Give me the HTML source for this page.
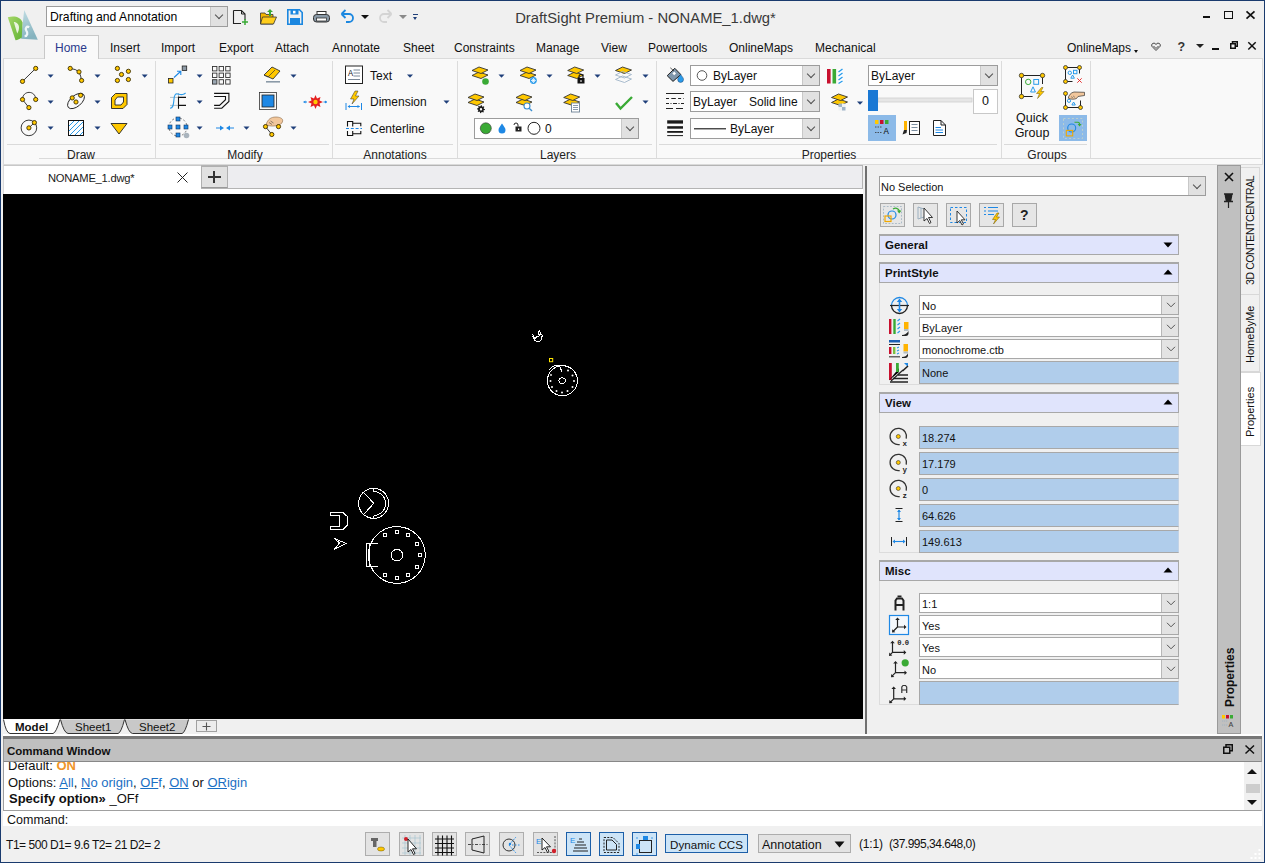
<!DOCTYPE html>
<html><head><meta charset="utf-8">
<style>
*{box-sizing:border-box;margin:0;padding:0}
html,body{width:1265px;height:863px;overflow:hidden;background:#f0f0f0;font-family:"Liberation Sans",sans-serif;font-size:12px;color:#000}
.a{position:absolute}
svg{position:absolute;overflow:visible}
.t{position:absolute;white-space:nowrap;line-height:1}
.combo{position:absolute;background:#fff;border:1px solid #9c9c9c}
.combo .dd{position:absolute;right:0;top:0;bottom:0;width:17px;background:#e1e1e1;border-left:1px solid #c8c8c8}
.combo .dd:after{content:"";position:absolute;left:5px;top:5px;width:5px;height:5px;border-right:1px solid #505050;border-bottom:1px solid #505050;transform:rotate(45deg)}
.sep{position:absolute;width:1px;background:#dcdcdc}
.tri{position:absolute;width:0;height:0;border-left:3.5px solid transparent;border-right:3.5px solid transparent;border-top:4px solid #1f3f7a}
</style></head><body>
<!-- window border -->
<div class="a" style="left:0;top:0;width:1265px;height:863px;border:1px solid #1a3b6e;border-width:1px 1px 1px 1px"></div>

<div id="title">
<!-- DS logo -->
<svg style="left:0;top:0" width="45" height="45" viewBox="0 0 45 45">
 <defs><linearGradient id="lg1" x1="0" y1="0" x2="1" y2="1"><stop offset="0" stop-color="#a6d867"/><stop offset="1" stop-color="#62b236"/></linearGradient>
 <linearGradient id="lg2" x1="0" y1="0" x2="0.3" y2="1"><stop offset="0" stop-color="#c2dde4"/><stop offset="1" stop-color="#85b3bf"/></linearGradient></defs>
 <path d="M24.2 10 L37.8 39.8 L21 38.8 Z" fill="url(#lg2)"/>
 <path d="M7.8 17.2 C14 15.5 20.5 16.5 22.5 22.5 L21.8 37.5 C20 39 17.5 40 15.5 40.2 Z" fill="url(#lg1)"/>
 <path d="M13.8 22 C16.8 22 19.2 24.5 19 27.5 C19 30 18.2 32 17.2 33.5 Z" fill="#eaf4dd"/>
 <path d="M29.2 27.2 C26.5 25.8 24.8 28.5 26.3 30.6 C28 32.8 27.6 36 24.6 36.2" stroke="#eef6f8" stroke-width="2.3" fill="none"/>
</svg>
<div class="combo" style="left:46px;top:6px;width:182px;height:21px"><div class="dd"></div>
 <div class="t" style="left:3px;top:4px;font-size:12.2px">Drafting and Annotation</div></div>
<!-- new -->
<svg style="left:233px;top:10px" width="16" height="15" viewBox="0 0 16 15"><path d="M0.5 0.5 H8.5 L12 4 V10 M0.5 0.5 V13.5 H8" fill="none" stroke="#222" stroke-width="1.1"/><path d="M8.5 0.5 V4 H12" fill="none" stroke="#222" stroke-width="1"/><path d="M12 9 V15 M9 12 H15" stroke="#39a935" stroke-width="1.5"/></svg>
<!-- open -->
<svg style="left:260px;top:8px" width="17" height="17" viewBox="0 0 17 17"><path d="M0.5 5 H5 L6 6.5 H13 V16 H0.5 Z" fill="#f5b800" stroke="#333" stroke-width="0.8"/><path d="M2.5 9 H16.5 L13.5 16 H0.5 Z" fill="#ffcd1c" stroke="#333" stroke-width="0.8"/><path d="M10 1 L7 4 H9 V8 H11 V4 H13 Z" fill="#39a935"/></svg>
<!-- save -->
<svg style="left:287px;top:9px" width="16" height="16" viewBox="0 0 16 16"><path d="M0.8 0.8 H12.5 L15.2 3.5 V15.2 H0.8 Z" fill="none" stroke="#1b87e0" stroke-width="1.6"/><rect x="3.5" y="1" width="8" height="4.5" fill="#1b87e0"/><rect x="6" y="1.8" width="2.5" height="2.6" fill="#fff"/><rect x="3" y="9" width="10" height="6" fill="#1b87e0"/></svg>
<!-- print -->
<svg style="left:313px;top:11px" width="17" height="12" viewBox="0 0 17 12"><rect x="4" y="0.5" width="9" height="4" fill="#fff" stroke="#333"/><rect x="0.5" y="3.5" width="16" height="7.5" rx="3" fill="#8a9aa8" stroke="#333"/><rect x="3.5" y="7" width="10" height="3" fill="#fff" stroke="#333" stroke-width="0.8"/></svg>
<!-- undo -->
<svg style="left:341px;top:9px" width="13" height="15" viewBox="0 0 13 15"><path d="M1.5 5 H8 A4 4 0 0 1 8 13 H5" fill="none" stroke="#1b87e0" stroke-width="1.8"/><path d="M0.5 5 L4.5 1 M0.5 5 L4.5 9" stroke="#1b87e0" stroke-width="1.8" fill="none"/></svg>
<div class="tri" style="left:361px;top:15px;border-top-color:#111;border-left-width:4px;border-right-width:4px"></div>
<svg style="left:379px;top:9px" width="13" height="15" viewBox="0 0 13 15"><path d="M11.5 5 H5 A4 4 0 0 0 5 13 H8" fill="none" stroke="#d4d4d4" stroke-width="1.8"/><path d="M12.5 5 L8.5 1 M12.5 5 L8.5 9" stroke="#d4d4d4" stroke-width="1.8" fill="none"/></svg>
<div class="tri" style="left:399px;top:15px;border-top-color:#8a8a8a;border-left-width:4px;border-right-width:4px"></div>
<div class="a" style="left:413px;top:14px;width:5px;height:1px;background:#1f3f7a"></div>
<div class="tri" style="left:413px;top:17px;border-left-width:2.5px;border-right-width:2.5px;border-top-width:3px"></div>
<div class="t" style="left:0;width:1291px;text-align:center;top:11px;font-size:14.8px;color:#3a3a3a">DraftSight Premium - NONAME_1.dwg*</div>
<!-- window controls -->
<div class="a" style="left:1203px;top:15.5px;width:6.5px;height:2.2px;background:#111"></div>
<div class="a" style="left:1223.5px;top:10.5px;width:9.5px;height:8.5px;border:1.6px solid #111"></div>
<svg style="left:1246px;top:11px" width="9" height="8" viewBox="0 0 9 8"><path d="M0.5 0.3 L8.5 7.7 M8.5 0.3 L0.5 7.7" stroke="#111" stroke-width="1.7"/></svg>
</div>

<div id="ribbon">
<div class="a" style="left:3px;top:58px;width:1260px;height:107px;background:#f9f9f9;border:1px solid #dadada"></div>
<div class="a" style="left:44px;top:35px;width:55px;height:24px;background:#f9f9f9;border:1px solid #c8c8c8;border-bottom:none"></div>
<div class="t" style="left:55px;top:41.5px;font-size:12px;color:#2b3a8c">Home</div>
<div class="t" style="left:110px;top:41.5px;font-size:12px;color:#111">Insert</div>
<div class="t" style="left:161px;top:41.5px;font-size:12px;color:#111">Import</div>
<div class="t" style="left:219px;top:41.5px;font-size:12px;color:#111">Export</div>
<div class="t" style="left:275px;top:41.5px;font-size:12px;color:#111">Attach</div>
<div class="t" style="left:332px;top:41.5px;font-size:12px;color:#111">Annotate</div>
<div class="t" style="left:403px;top:41.5px;font-size:12px;color:#111">Sheet</div>
<div class="t" style="left:454px;top:41.5px;font-size:12px;color:#111">Constraints</div>
<div class="t" style="left:536px;top:41.5px;font-size:12px;color:#111">Manage</div>
<div class="t" style="left:601px;top:41.5px;font-size:12px;color:#111">View</div>
<div class="t" style="left:648px;top:41.5px;font-size:12px;color:#111">Powertools</div>
<div class="t" style="left:729px;top:41.5px;font-size:12px;color:#111">OnlineMaps</div>
<div class="t" style="left:815px;top:41.5px;font-size:12px;color:#111">Mechanical</div>
<div class="t" style="left:1067px;top:41.5px;font-size:12px;color:#111">OnlineMaps</div>
<div class="tri" style="left:1133.5px;top:49.5px;border-top-color:#111;border-left-width:2.8px;border-right-width:2.8px;border-top-width:3px"></div>
<svg style="left:1150.5px;top:42.5px" width="10" height="8" viewBox="0 0 10 8"><path d="M5 7.5 L0.8 3.2 A2.1 2.1 0 0 1 5 1.6 A2.1 2.1 0 0 1 9.2 3.2 Z M2.5 3 L5 5.5 L7.5 3" fill="none" stroke="#444" stroke-width="1"/></svg>
<div class="t" style="left:1177.5px;top:40.5px;font-size:12.5px;font-weight:bold;color:#333">?</div>
<div class="tri" style="left:1196px;top:44px;border-top-color:#222;border-left-width:4px;border-right-width:4px;border-top-width:4px"></div>
<div class="a" style="left:1212px;top:48px;width:7px;height:2px;background:#111"></div>
<svg style="left:1230px;top:41.3px" width="8" height="8" viewBox="0 0 8 8"><rect x="0.75" y="2.75" width="4.5" height="4.5" fill="none" stroke="#111" stroke-width="1.5"/><path d="M2.5 2.5 V0.75 H7.25 V5.25 H5.5" fill="none" stroke="#111" stroke-width="1.5"/></svg>
<svg style="left:1248px;top:42px" width="8" height="8" viewBox="0 0 8 8"><path d="M0.3 0.3 L7.7 7.5 M7.7 0.3 L0.3 7.5" stroke="#111" stroke-width="1.5"/></svg>
<div class="combo" style="left:474px;top:118px;width:165px;height:21px"><div class="dd"></div></div><div class="combo" style="left:690px;top:65px;width:130px;height:21px"><div class="dd"></div></div><div class="combo" style="left:690px;top:91px;width:130px;height:21px"><div class="dd"></div></div><div class="combo" style="left:690px;top:118px;width:130px;height:21px"><div class="dd"></div></div><div class="combo" style="left:868px;top:65px;width:130px;height:21px"><div class="dd"></div></div><div class="a" style="left:973px;top:89px;width:25px;height:25px;background:#fff;border:1px solid #c8c8c8"></div><svg style="left:0;top:0" width="1265" height="165" viewBox="0 0 1265 165">
<path d="M22.5 81.4 L35.7 68.4" stroke="#222" stroke-width="0.9"/><circle cx="22.5" cy="81.4" r="2.1" fill="#ffc800" stroke="#3a2d00" stroke-width="0.9"/><circle cx="35.7" cy="68.4" r="2.1" fill="#ffc800" stroke="#3a2d00" stroke-width="0.9"/><path d="M70.2 68.4 Q76 69 79 71.9 Q81 76 81.6 80.5" stroke="#222" stroke-width="0.9" fill="none"/><circle cx="70.2" cy="68.4" r="2.1" fill="#ffc800" stroke="#3a2d00" stroke-width="0.9"/><circle cx="79" cy="71.9" r="2.1" fill="#ffc800" stroke="#3a2d00" stroke-width="0.9"/><circle cx="81.6" cy="80.5" r="2.1" fill="#ffc800" stroke="#3a2d00" stroke-width="0.9"/><circle cx="117.4" cy="68.4" r="2.1" fill="#ffc800" stroke="#3a2d00" stroke-width="0.9"/><circle cx="128.4" cy="71.3" r="2.1" fill="#ffc800" stroke="#3a2d00" stroke-width="0.9"/><circle cx="121.5" cy="74.5" r="2.1" fill="#ffc800" stroke="#3a2d00" stroke-width="0.9"/><circle cx="117.4" cy="80.5" r="2.1" fill="#ffc800" stroke="#3a2d00" stroke-width="0.9"/><circle cx="128.4" cy="79.5" r="2.1" fill="#ffc800" stroke="#3a2d00" stroke-width="0.9"/><path d="M22.5 99.5 C22.5 90 35.7 90 35.7 99.5 M22.5 99.5 L28.9 107.6" stroke="#222" stroke-width="0.9" fill="none"/><circle cx="22.5" cy="99.5" r="2.1" fill="#ffc800" stroke="#3a2d00" stroke-width="0.9"/><circle cx="35.7" cy="99.5" r="2.1" fill="#ffc800" stroke="#3a2d00" stroke-width="0.9"/><circle cx="28.9" cy="107.6" r="2.1" fill="#ffc800" stroke="#3a2d00" stroke-width="0.9"/><ellipse cx="76" cy="101" rx="10" ry="5.5" transform="rotate(-40 76 101)" fill="none" stroke="#222" stroke-width="0.9"/><circle cx="72.2" cy="97.9" r="2.1" fill="#ffc800" stroke="#3a2d00" stroke-width="0.9"/><circle cx="80.6" cy="95.3" r="2.1" fill="#ffc800" stroke="#3a2d00" stroke-width="0.9"/><circle cx="76" cy="102" r="2.1" fill="#ffc800" stroke="#3a2d00" stroke-width="0.9"/><path d="M115.5 93.5 H127 V104.5 L123 108.5 H111.5 V97.5 Z M117.5 97 H123.5 V102 L121 105 H115 V100 Z" fill="#ffc800" fill-rule="evenodd" stroke="#222" stroke-width="0.9"/><circle cx="28.9" cy="127.9" r="7.8" fill="none" stroke="#222" stroke-width="0.9"/><path d="M28.9 127.9 L34.4 122.6" stroke="#222" stroke-width="0.9"/><circle cx="28.9" cy="127.9" r="2.1" fill="#ffc800" stroke="#3a2d00" stroke-width="0.9"/><circle cx="34.4" cy="122.6" r="2.1" fill="#ffc800" stroke="#3a2d00" stroke-width="0.9"/><rect x="68.5" y="120.5" width="15" height="15" fill="#fff" stroke="#111" stroke-width="1"/><path d="M69 126 L74 121 M69 131 L79 121 M70 135 L83 122 M75 135 L83 127 M80 135 L83 132" stroke="#2a9bea" stroke-width="1"/><path d="M111 123.5 H127 L119 134 Z" fill="#ffc800" stroke="#222" stroke-width="0.9"/><path d="M47.6 74.5 H53.6 L50.6 77.8 Z" fill="#1f3f7a"/><path d="M47.6 100.5 H53.6 L50.6 103.8 Z" fill="#1f3f7a"/><path d="M47.6 126.5 H53.6 L50.6 129.8 Z" fill="#1f3f7a"/><path d="M94.5 74.5 H100.5 L97.5 77.8 Z" fill="#1f3f7a"/><path d="M94.5 100.5 H100.5 L97.5 103.8 Z" fill="#1f3f7a"/><path d="M94.5 126.5 H100.5 L97.5 129.8 Z" fill="#1f3f7a"/><path d="M141.7 74.5 H147.7 L144.7 77.8 Z" fill="#1f3f7a"/><rect x="168.5" y="78.5" width="4.5" height="4.5" fill="#ffc800" stroke="#222" stroke-width="0.8"/><rect x="182.2" y="66" width="4.5" height="4.5" fill="#8e9ba6" stroke="#222" stroke-width="0.8"/><path d="M174 77.5 L180.5 71.5 M177 71.3 H180.8 V75" stroke="#1e88e5" stroke-width="1.1" fill="none"/><rect x="212.5" y="66.5" width="4.4" height="4.4" fill="none" stroke="#333" stroke-width="0.9"/><rect x="219.1" y="66.5" width="4.4" height="4.4" fill="none" stroke="#333" stroke-width="0.9"/><rect x="225.7" y="66.5" width="4.4" height="4.4" fill="none" stroke="#333" stroke-width="0.9"/><rect x="212.5" y="73.1" width="4.4" height="4.4" fill="none" stroke="#333" stroke-width="0.9"/><rect x="219.1" y="73.1" width="4.4" height="4.4" fill="none" stroke="#333" stroke-width="0.9"/><rect x="225.7" y="73.1" width="4.4" height="4.4" fill="none" stroke="#333" stroke-width="0.9"/><rect x="212.5" y="79.7" width="4.4" height="4.4" fill="#9aa7b2" stroke="#333" stroke-width="0.9"/><rect x="219.1" y="79.7" width="4.4" height="4.4" fill="none" stroke="#333" stroke-width="0.9"/><rect x="225.7" y="79.7" width="4.4" height="4.4" fill="none" stroke="#333" stroke-width="0.9"/><path d="M264 75 L272 67 L280 71 L273 79 Z" fill="#ffc800" stroke="#333" stroke-width="0.9"/><path d="M264 75 L268 77 L275 70" stroke="#333" stroke-width="0.7" fill="none"/><rect x="266" y="81" width="14" height="1.6" fill="#8b9aa8"/><path d="M170 97.4 H178.5 M170 105.4 H178.5 M178.5 93 V96.5" stroke="#9fb0ba" stroke-width="0.8"/><path d="M178.5 96.5 V108.8 M178.5 97.4 H186 M178.5 105.4 H186" stroke="#111" stroke-width="1.1" fill="none"/><path d="M170 108.2 C173.5 108.2 173.5 104 174 99 C174.3 95 175 93.8 177 93.8 C179 94 180 95 182.5 94.5 C184 94.2 185 93.5 185.6 93" stroke="#2a9bea" stroke-width="1.1" fill="none"/><path d="M214.1 93.4 H228.9 V101.4 L221.8 108.2 H214.1 M214.1 96.5 H225.5 V99.7 L219.5 105.4 H214.1" stroke="#111" stroke-width="1.1" fill="none"/><rect x="259.5" y="92.5" width="17" height="17" fill="none" stroke="#333" stroke-width="0.8"/><rect x="262" y="95" width="12" height="12" fill="#1e88e5" stroke="#222" stroke-width="0.8"/><path d="M315.5 95 L317 98.5 L320.5 97 L319.5 100.5 L323 102 L319.5 103.5 L320.5 107 L317 105.5 L315.5 109 L314 105.5 L310.5 107 L311.5 103.5 L308 102 L311.5 100.5 L310.5 97 L314 98.5 Z" fill="#e52020"/><circle cx="315.5" cy="102" r="2.2" fill="#ffc800"/><path d="M303.5 102 H307 M323.5 102 H327" stroke="#1e88e5" stroke-width="1"/><path d="M303.5 102 L305.5 100.5 V103.5 Z M327 102 L325 100.5 V103.5 Z" fill="#1e88e5"/><circle cx="178" cy="127" r="9" fill="none" stroke="#555" stroke-width="0.8" stroke-dasharray="2 2"/><rect x="176" y="117" width="4" height="4" fill="#1e88e5" stroke="#13325b" stroke-width="0.6"/><rect x="168" y="125" width="4" height="4" fill="#1e88e5" stroke="#13325b" stroke-width="0.6"/><rect x="176" y="125" width="4" height="4" fill="#1e88e5" stroke="#13325b" stroke-width="0.6"/><rect x="184" y="125" width="4" height="4" fill="#1e88e5" stroke="#13325b" stroke-width="0.6"/><rect x="176" y="133" width="4" height="4" fill="#1e88e5" stroke="#13325b" stroke-width="0.6"/><circle cx="186.5" cy="135.5" r="2.8" fill="#a9b4bd"/><path d="M216 128 H221 M234 128 H229" stroke="#1e88e5" stroke-width="1.1"/><path d="M224 128 L220 125.5 V130.5 Z M226 128 L230 125.5 V130.5 Z" fill="#1e88e5"/><path d="M265.5 126.6 L271.8 134.5" stroke="#222" stroke-width="0.9" fill="none"/><path d="M266 124.5 C268 119 271 117 276 117 C279 117 283 118 282.7 121 C282.5 124 279 125 277 125.5 C273 126.5 270 126 268 125.5 Z" fill="#f2c79c" stroke="#8a6a4a" stroke-width="0.6"/><path d="M269 122.5 L272 124.5 M270.5 121 L273.5 123" stroke="#444" stroke-width="0.6"/><circle cx="265.5" cy="126.6" r="2.1" fill="#ffc800" stroke="#3a2d00" stroke-width="0.9"/><circle cx="278.5" cy="126.6" r="2.1" fill="#ffc800" stroke="#3a2d00" stroke-width="0.9"/><circle cx="271.8" cy="134.5" r="2.1" fill="#ffc800" stroke="#3a2d00" stroke-width="0.9"/><path d="M196.6 74.5 H202.6 L199.6 77.8 Z" fill="#1f3f7a"/><path d="M290.5 74.5 H296.5 L293.5 77.8 Z" fill="#1f3f7a"/><path d="M196.6 100.5 H202.6 L199.6 103.8 Z" fill="#1f3f7a"/><path d="M196.6 126.5 H202.6 L199.6 129.8 Z" fill="#1f3f7a"/><path d="M243.5 126.5 H249.5 L246.5 129.8 Z" fill="#1f3f7a"/><path d="M290.5 126.5 H296.5 L293.5 129.8 Z" fill="#1f3f7a"/><rect x="345.5" y="66" width="17" height="17.5" fill="#fff" stroke="#222" stroke-width="1"/><text x="348" y="76" font-family="Liberation Mono" font-size="8.5" fill="#222">A</text><path d="M353.5 70 H360 M353.5 73 H360 M353.5 76 H360 M348 79.5 H360" stroke="#6a7b8c" stroke-width="0.9"/><path d="M355 91 L350.5 99 H354 L352 104 L359 96 H355.5 L358 91 Z" fill="#ffc800" stroke="#333" stroke-width="0.5"/><path d="M346 103 V110 M361.5 103 V110 M348 106.5 H359.5" stroke="#1e88e5" stroke-width="1"/><path d="M347.5 106.5 L350 105 V108 Z M360 106.5 L357.5 105 V108 Z" fill="#1e88e5"/><path d="M347.5 126.5 V121.5 H352.7 V126.5 M352.7 123.2 H360.8 V126.2 M347.5 131 V135.5 H352.7 V131 M352.7 133.8 H360.8 V131" fill="none" stroke="#111" stroke-width="1.1"/><path d="M346 128.5 H362" stroke="#1e88e5" stroke-width="1" stroke-dasharray="3 1.8"/><path d="M407 74.5 H413 L410 77.8 Z" fill="#1f3f7a"/><path d="M443.5 100.5 H449.5 L446.5 103.8 Z" fill="#1f3f7a"/><path d="M472 75.5 L479 72 L488 75 L481 78.5 Z" fill="#ffc800" stroke="#333" stroke-width="0.9"/><path d="M472 70.5 L479 67 L488 70 L481 73.5 Z" fill="#ffc800" stroke="#333" stroke-width="0.9"/><circle cx="485.5" cy="81.5" r="3.3" fill="#3aaa35"/><path d="M520 75.5 L527 72 L536 75 L529 78.5 Z" fill="#ffc800" stroke="#333" stroke-width="0.9"/><path d="M520 70.5 L527 67 L536 70 L529 73.5 Z" fill="#ffc800" stroke="#333" stroke-width="0.9"/><circle cx="533.4" cy="80.5" r="3.4" fill="#2a9bea"/><path d="M531 80.5 H535.8 M533.4 78 V83 M531.7 78.8 L535.1 82.2 M535.1 78.8 L531.7 82.2" stroke="#fff" stroke-width="0.8"/><path d="M567.7 75.5 L574.7 72 L583.7 75 L576.7 78.5 Z" fill="#ffc800" stroke="#333" stroke-width="0.9"/><path d="M567.7 70.5 L574.7 67 L583.7 70 L576.7 73.5 Z" fill="#ffc800" stroke="#333" stroke-width="0.9"/><rect x="577.5" y="78" width="7" height="5.5" fill="#111"/><path d="M579 78.5 V76.5 A2 2 0 0 1 583 76.5 V78.5" fill="none" stroke="#111" stroke-width="1.1"/><rect x="580.5" y="80" width="1" height="2" fill="#fff"/><path d="M615.5 70.5 L622.5 67 L631.5 70 L624.5 73.5 Z" fill="#ffc800" stroke="#333" stroke-width="0.9"/><path d="M615.5 75 L622.5 71.5 L631.5 74.5 L624.5 78 Z M615.5 79.5 L622.5 76 L631.5 79 L624.5 82.5 Z" fill="none" stroke="#9fb4c8" stroke-width="0.9"/><path d="M468 102.5 L475 99 L484 102 L477 105.5 Z" fill="#ffc800" stroke="#333" stroke-width="0.9"/><path d="M468 97.5 L475 94 L484 97 L477 100.5 Z" fill="#ffc800" stroke="#333" stroke-width="0.9"/><path d="M485.00 109.20 L484.92 109.98 L483.68 110.31 L483.41 110.81 L483.83 112.03 L483.22 112.53 L482.11 111.88 L481.57 112.04 L481.00 113.20 L480.22 113.12 L479.89 111.88 L479.39 111.61 L478.17 112.03 L477.67 111.42 L478.32 110.31 L478.16 109.77 L477.00 109.20 L477.08 108.42 L478.32 108.09 L478.59 107.59 L478.17 106.37 L478.78 105.87 L479.89 106.52 L480.43 106.36 L481.00 105.20 L481.78 105.28 L482.11 106.52 L482.61 106.79 L483.83 106.37 L484.33 106.98 L483.68 108.09 L483.84 108.63 Z M482.2 109.2 A1.2 1.2 0 1 0 479.8 109.2 A1.2 1.2 0 1 0 482.2 109.2 Z" fill="#1a1a1a" fill-rule="evenodd"/><path d="M516 102.5 L523 99 L532 102 L525 105.5 Z" fill="#ffc800" stroke="#333" stroke-width="0.9"/><path d="M516 97.5 L523 94 L532 97 L525 100.5 Z" fill="#ffc800" stroke="#333" stroke-width="0.9"/><circle cx="527" cy="106" r="3" fill="#fff" stroke="#3b8ed0" stroke-width="1.1"/><path d="M529.2 108.2 L532 111" stroke="#3b8ed0" stroke-width="1.4"/><path d="M563.7 102.5 L570.7 99 L579.7 102 L572.7 105.5 Z" fill="#ffc800" stroke="#333" stroke-width="0.9"/><path d="M563.7 97.5 L570.7 94 L579.7 97 L572.7 100.5 Z" fill="#ffc800" stroke="#333" stroke-width="0.9"/><rect x="571.5" y="103" width="8" height="9" fill="#fff" stroke="#6d8296" stroke-width="0.9"/><path d="M573 105.5 H578 M573 107.5 H578 M573 109.5 H578" stroke="#6d8296" stroke-width="0.8"/><path d="M616 103 L620.5 108.5 L632 97" stroke="#3aaa35" stroke-width="2.4" fill="none"/><path d="M498.5 74.5 H504.5 L501.5 77.8 Z" fill="#1f3f7a"/><path d="M546.5 74.5 H552.5 L549.5 77.8 Z" fill="#1f3f7a"/><path d="M594.5 74.5 H600.5 L597.5 77.8 Z" fill="#1f3f7a"/><path d="M642.5 74.5 H648.5 L645.5 77.8 Z" fill="#1f3f7a"/><path d="M642.5 100.5 H648.5 L645.5 103.8 Z" fill="#1f3f7a"/><circle cx="485.8" cy="128.3" r="5.5" fill="#3aaa35" stroke="#333" stroke-width="0.6"/><path d="M502 123.5 C504 126.5 505.5 128 505.5 130 A3.5 3.5 0 0 1 498.5 130 C498.5 128 500 126.5 502 123.5 Z" fill="#1e88e5"/><path d="M514 125 A2 2 0 0 1 518 125 V126.5" fill="none" stroke="#222" stroke-width="1"/><rect x="515.5" y="126.5" width="6" height="5" fill="#222"/><rect x="518" y="128.5" width="1.2" height="1.5" fill="#fff"/><circle cx="534" cy="128.3" r="6" fill="#fff" stroke="#222" stroke-width="1"/><path d="M674.8 68.3 L680.8 74.5 L673 81.4 L667.2 75.7 Z" fill="#7f96ab" stroke="#222" stroke-width="1"/><path d="M674.2 71.6 L676 73.4 L674.2 75.2 L672.4 73.4 Z" fill="#fff"/><path d="M670.3 67.8 L674 71" stroke="#333" stroke-width="0.8"/><path d="M680.6 74.5 C682.5 77 683.5 78 683.5 79.5 A2.9 2.9 0 0 1 677.7 79.5 C677.7 78 678.7 77 680.6 74.5 Z" fill="#2a9bea" stroke="#1a3f6a" stroke-width="0.5"/><circle cx="702" cy="75.5" r="4.8" fill="#fff" stroke="#444" stroke-width="0.9"/><path d="M666 93.5 H684" stroke="#222" stroke-width="1"/><path d="M666 98.5 H684" stroke="#222" stroke-width="1" stroke-dasharray="3 2.3 4.5 2.3"/><path d="M666 103.5 H684" stroke="#222" stroke-width="1" stroke-dasharray="3 1.5 1 1.5 4 1.5 1 1.5"/><path d="M666 108.5 H684" stroke="#222" stroke-width="1" stroke-dasharray="7 3"/><rect x="667.2" y="120.3" width="15.8" height="3.3" fill="#1a1a1a"/><rect x="667.2" y="126.2" width="15.8" height="2.5" fill="#1a1a1a"/><rect x="667.2" y="131" width="15.8" height="1.8" fill="#1a1a1a"/><rect x="667.2" y="135.1" width="15.8" height="1" fill="#1a1a1a"/><path d="M694 128.8 H726" stroke="#111" stroke-width="1.1"/><rect x="827" y="69" width="3.6" height="14.5" fill="#c8102e"/><rect x="832.5" y="69" width="3.6" height="14.5" fill="#3aaa35"/><rect x="838.5" y="69" width="4" height="14.5" fill="#fff"/><path d="M838.5 72 L842.5 69 M838.5 76 L842.5 73 M838.5 80 L842.5 77 M838.5 83.5 L842.5 81" stroke="#2a9bea" stroke-width="1.4"/><path d="M831.5 102.5 L838.5 99 L847.5 102 L840.5 105.5 Z" fill="#ffc800" stroke="#333" stroke-width="0.9"/><path d="M831.5 97.5 L838.5 94 L847.5 97 L840.5 100.5 Z" fill="#ffc800" stroke="#333" stroke-width="0.9"/><rect x="838.5" y="103.5" width="3.5" height="3.5" fill="#9fb4c8"/><rect x="842" y="107" width="3.5" height="3.5" fill="#9fb4c8"/><rect x="838.5" y="107" width="3.5" height="3.5" fill="#eef1f4"/><rect x="842" y="103.5" width="3.5" height="3.5" fill="#eef1f4"/><path d="M857 101.5 H863 L860 104.8 Z" fill="#1f3f7a"/><rect x="878" y="98" width="94" height="4" fill="#e6e6e6" stroke="#d0d0d0" stroke-width="0.8"/><rect x="868" y="90" width="10" height="21" fill="#1a78d4"/><rect x="868" y="115" width="28" height="26" fill="#8cbae8"/><rect x="875" y="120" width="3.5" height="4" fill="#ffc800"/><rect x="880" y="120" width="3.5" height="4" fill="#c8102e"/><rect x="885" y="120" width="3.5" height="4" fill="#3aaa35"/><path d="M875 127 H882 M875 132.5 H882" stroke="#333" stroke-width="0.8" stroke-dasharray="1.5 1"/><text x="883.5" y="134" font-family="Liberation Mono" font-size="9" fill="#111">A</text><rect x="904" y="121" width="3" height="9" fill="#ffb300"/><path d="M902.5 134.5 L904 130 H907 L906.5 133 Z" fill="#222"/><rect x="909.5" y="121.5" width="10" height="13" fill="#fff" stroke="#222" stroke-width="1"/><path d="M911.5 124.5 H917.5 M911.5 127.5 H917.5 M911.5 130.5 H917.5" stroke="#6d8296" stroke-width="0.9"/><path d="M933.5 120.5 H941 L945.5 125 V135.5 H933.5 Z M941 120.5 V125 H945.5" fill="#fff" stroke="#222" stroke-width="1"/><path d="M935.5 127.5 H941 M935.5 130 H943 M935.5 132.5 H943" stroke="#1e88e5" stroke-width="1"/><path d="M1021.5 75.5 H1042.5 V84 M1021.5 75.5 V96.5 H1032.6" stroke="#222" stroke-width="1" fill="none"/><circle cx="1028.2" cy="81.9" r="2.7" fill="none" stroke="#3aaa35" stroke-width="1"/><rect x="1033.8" y="79.5" width="4.8" height="4.8" fill="none" stroke="#2a9bea" stroke-width="1"/><path d="M1030.6 92 L1033 86.8 L1035.4 92 Z" fill="none" stroke="#2a9bea" stroke-width="1"/><path d="M1041.5 87.5 L1036.5 93.5 H1039.5 L1037.5 98.5 L1044 91.5 H1040.8 L1043 87.5 Z" fill="#ffc800" stroke="#6b5400" stroke-width="0.5"/><circle cx="1021.5" cy="75.5" r="2.2" fill="#ffc800" stroke="#333" stroke-width="0.8"/><circle cx="1042.5" cy="75.5" r="2.2" fill="#ffc800" stroke="#333" stroke-width="0.8"/><circle cx="1021.5" cy="96.5" r="2.2" fill="#ffc800" stroke="#333" stroke-width="0.8"/><path d="M1065.5 67.5 H1079.5 V73.5 M1065.5 67.5 V81.5 H1072.5" stroke="#222" stroke-width="1" fill="none"/><circle cx="1069.8" cy="72.8" r="1.7" fill="none" stroke="#2a9bea" stroke-width="1"/><rect x="1073.5" y="70.3" width="3.4" height="3.4" fill="none" stroke="#2a9bea" stroke-width="1"/><path d="M1070.8 78.2 L1072.6 75 L1074.4 78.2 Z" fill="none" stroke="#2a9bea" stroke-width="1"/><path d="M1077.3 78.3 L1081.7 82.7 M1081.7 78.3 L1077.3 82.7" stroke="#e52020" stroke-width="0.9"/><circle cx="1065.5" cy="67.5" r="2" fill="#ffc800" stroke="#333" stroke-width="0.8"/><circle cx="1079.5" cy="67.5" r="2" fill="#ffc800" stroke="#333" stroke-width="0.8"/><circle cx="1065.5" cy="81.5" r="2" fill="#ffc800" stroke="#333" stroke-width="0.8"/><path d="M1065.5 93.5 V107.5 H1080.5 V100.5" stroke="#222" stroke-width="1" fill="none"/><circle cx="1069" cy="100.8" r="1.6" fill="none" stroke="#2a9bea" stroke-width="1"/><path d="M1071.9 105 L1073.6 102 L1075.3 105 Z" fill="none" stroke="#2a9bea" stroke-width="1"/><path d="M1068.3 98.2 C1068.5 95.5 1071 92.5 1074 92 L1084.5 92.3 V95.5 L1078 96.5 L1076.5 98.5 C1074 99.5 1071 99.5 1068.3 98.2 Z" fill="#f2c79c" stroke="#333" stroke-width="0.7"/><path d="M1071 96.5 L1073 98 M1073 95.8 L1075 97.5" stroke="#555" stroke-width="0.6"/><circle cx="1065.5" cy="93.5" r="2" fill="#ffc800" stroke="#333" stroke-width="0.8"/><circle cx="1065.5" cy="107.5" r="2" fill="#ffc800" stroke="#333" stroke-width="0.8"/><circle cx="1080.5" cy="107.5" r="2" fill="#ffc800" stroke="#333" stroke-width="0.8"/><rect x="1059" y="115" width="28" height="26" fill="#8cbae8"/><rect x="1063.5" y="118.5" width="19" height="20" fill="none" stroke="#c8d4c8" stroke-width="0.8" stroke-dasharray="2 2.2"/><circle cx="1071.7" cy="128" r="4" fill="none" stroke="#1e88e5" stroke-width="1.1"/><rect x="1066.3" y="130.4" width="6.4" height="5.5" fill="none" stroke="#f0a800" stroke-width="1.1"/><path d="M1074.5 122.3 H1078 C1079.3 122.3 1079.6 123 1079.6 124.5" stroke="#3aaa35" stroke-width="1.1" fill="none"/><path d="M1077.6 124 H1081.6 L1079.6 126.5 Z" fill="#3aaa35"/></svg>
<div class="t" style="left:370px;top:70px;font-size:12px;color:#111">Text</div>
<div class="t" style="left:370px;top:96px;font-size:12px;color:#111">Dimension</div>
<div class="t" style="left:370px;top:123px;font-size:12px;color:#111">Centerline</div>
<div class="t" style="left:545px;top:123px;font-size:12px;color:#111">0</div><div class="t" style="left:713px;top:70px;font-size:12px;color:#111">ByLayer</div><div class="t" style="left:693px;top:96px;font-size:12px;color:#111">ByLayer</div><div class="t" style="left:749px;top:96px;font-size:12px;color:#111">Solid line</div><div class="t" style="left:730px;top:123px;font-size:12px;color:#111">ByLayer</div><div class="t" style="left:871px;top:70px;font-size:12px;color:#111">ByLayer</div><div class="t" style="left:973px;top:95px;width:25px;text-align:center;font-size:12.5px;color:#111">0</div><div class="t" style="left:1002px;width:60px;text-align:center;top:111px;font-size:12.5px;color:#111;line-height:15px;white-space:normal">Quick<br>Group</div><div class="a" style="left:39px;top:158px;width:1222px;height:1px;background:#dadada"></div>
<div class="sep" style="left:155px;top:61px;height:97px"></div>
<div class="sep" style="left:332px;top:61px;height:97px"></div>
<div class="sep" style="left:457px;top:61px;height:97px"></div>
<div class="sep" style="left:656px;top:61px;height:97px"></div>
<div class="sep" style="left:1001px;top:61px;height:97px"></div>
<div class="sep" style="left:1090px;top:61px;height:97px"></div>
<div class="a" style="left:7px;top:144px;width:144px;height:1px;background:#dadada"></div>
<div class="a" style="left:159px;top:144px;width:170px;height:1px;background:#dadada"></div>
<div class="a" style="left:335px;top:144px;width:118px;height:1px;background:#dadada"></div>
<div class="a" style="left:460px;top:144px;width:192px;height:1px;background:#dadada"></div>
<div class="a" style="left:659px;top:144px;width:338px;height:1px;background:#dadada"></div>
<div class="a" style="left:1004px;top:144px;width:83px;height:1px;background:#dadada"></div>
<div class="t" style="left:21px;width:120px;text-align:center;top:149px;font-size:12px;color:#222">Draw</div>
<div class="t" style="left:185px;width:120px;text-align:center;top:149px;font-size:12px;color:#222">Modify</div>
<div class="t" style="left:335px;width:120px;text-align:center;top:149px;font-size:12px;color:#222">Annotations</div>
<div class="t" style="left:498px;width:120px;text-align:center;top:149px;font-size:12px;color:#222">Layers</div>
<div class="t" style="left:769px;width:120px;text-align:center;top:149px;font-size:12px;color:#222">Properties</div>
<div class="t" style="left:987px;width:120px;text-align:center;top:149px;font-size:12px;color:#222">Groups</div>
</div>

<div id="doc">
<div class="a" style="left:3px;top:165px;width:860px;height:29px;background:#fff;border-top:1px solid #c8c8c8"></div>
<div class="a" style="left:201px;top:165px;width:662px;height:24px;background:#ededf0;border:1px solid #b4b4b4;border-left:none"></div>
<div class="a" style="left:3px;top:165px;width:198px;height:29px;background:#fff;border-top:1px solid #c8c8c8;border-left:1px solid #dadada"></div>
<div class="t" style="left:48px;top:173px;font-size:11.2px;letter-spacing:-0.25px;color:#1a1a1a">NONAME_1.dwg*</div>
<svg style="left:176.5px;top:171.5px" width="11" height="11" viewBox="0 0 11 11"><path d="M0.5 0.5 L10.5 10.5 M10.5 0.5 L0.5 10.5" stroke="#222" stroke-width="1"/></svg>
<div class="a" style="left:201px;top:166px;width:27px;height:22px;background:#e1e1e1;border:1px solid #b0b0b0;border-bottom-color:#999"></div>
<div class="a" style="left:208px;top:176px;width:12.5px;height:2px;background:#333"></div>
<div class="a" style="left:213.2px;top:170.8px;width:2px;height:12.3px;background:#333"></div>
<!-- canvas -->
<div class="a" style="left:3px;top:194px;width:860px;height:525px;background:#000"></div>
<svg style="left:0;top:0" width="1265" height="863" viewBox="0 0 1265 863">
<g fill="none" stroke="#fff" stroke-width="1" shape-rendering="crispEdges">
 <circle cx="396.9" cy="555" r="28.4"/>
 <circle cx="396.9" cy="555.2" r="5.8"/>
 <rect x="395.4" y="530.5" width="3" height="3"/><rect x="406.5" y="533.6" width="3" height="3"/><rect x="415.4" y="542.3" width="3" height="3"/><rect x="418.4" y="553.5" width="3" height="3"/><rect x="415.4" y="565.2" width="3" height="3"/><rect x="406.5" y="573.5" width="3" height="3"/><rect x="395.4" y="576.5" width="3" height="3"/><rect x="383.9" y="573.5" width="3" height="3"/><rect x="383.9" y="533.6" width="3" height="3"/>
 <path d="M378 543.5 H366.5 V566.5 H378 M369.5 543.5 V566.5"/>
 <circle cx="373.6" cy="503.3" r="15"/>
 <path d="M363.7 492.5 L373.8 503.3 L363.7 514.4"/>
 <path d="M373.6 491.5 A12 12 0 0 1 373.6 515.5 M373.6 488.3 V491.5 M373.6 515.5 V518.3 M385.8 500 V506"/>
 <path d="M330.5 512.5 H343 L347.8 517 V524.6 L343 529.5 H330.5 V526.6 H339.8 V515.5 H330.5 Z"/>
 <path d="M334.3 538.4 L345.9 543.4 L334.3 549.5 L339.5 543 Z"/>
 <circle cx="562.4" cy="380.7" r="15"/>
 <ellipse cx="562.2" cy="380.7" rx="3.3" ry="2.8"/>
 <path d="M548.5 370.5 Q554 364 559.5 365.5 L562 372"/>
 <path d="M531.5 335.5 L532.5 334.5 L533.5 335.5 L534.5 338.5 L535 340.5 L537.5 341.5 L539.5 341.5 L541 340 V337.5 L542.5 336 L541.5 334.5 L540.5 334 L540 332 L539.5 330.5 M532 336 L534.5 339 L537 336.5 H538.5 L539.5 335.5 L538.5 333.5 L539 331"/>
</g>
<g fill="#fff">
 <circle cx="551" cy="375" r="0.9"/><circle cx="550.5" cy="381" r="1"/><circle cx="552" cy="387" r="1"/><circle cx="556.5" cy="391" r="1"/><circle cx="562" cy="392.5" r="1"/><circle cx="567.5" cy="391" r="1"/><circle cx="572.5" cy="387" r="1"/><circle cx="574" cy="381" r="1"/><circle cx="572.5" cy="375.5" r="1"/><circle cx="568" cy="370.5" r="1"/>
</g>
<rect x="549.5" y="358.5" width="3.2" height="3.2" fill="none" stroke="#ffe600" stroke-width="1"/>
</svg>
<!-- layout tabs -->
<svg style="left:0;top:719px" width="230" height="16" viewBox="0 719 230 16">
 <path d="M3.5 719.5 Q6 733 10 733.5 H53 Q56 733 60 719.5" fill="#fff" stroke="#333" stroke-width="1"/>
 <path d="M60.5 719.5 Q64 733 68 733.5 H118 Q121 733 124.5 719.5" fill="#c8c8c8" stroke="#333" stroke-width="1"/>
 <path d="M125 719.5 Q128.5 733 132.5 733.5 H182 Q185 733 188.5 719.5" fill="#c8c8c8" stroke="#333" stroke-width="1"/>
 <rect x="196.5" y="720.5" width="20" height="11" fill="#ececec" stroke="#a0a0a0"/>
 <path d="M202.5 726.5 H210.5 M206.5 722.5 V730.5" stroke="#555" stroke-width="1.1"/>
</svg>
<div class="t" style="left:15px;top:722px;font-size:11.5px;font-weight:bold;color:#111">Model</div>
<div class="t" style="left:75px;top:722px;font-size:11.5px;color:#111">Sheet1</div>
<div class="t" style="left:139px;top:722px;font-size:11.5px;color:#111">Sheet2</div>
</div>
<div id="props">
<div class="a" style="left:865px;top:166px;width:2px;height:568px;background:#707070"></div>
<div class="combo" style="left:879px;top:176px;width:327px;height:20px"><div class="dd"></div><div class="t" style="left:1px;top:4.7px;font-size:11px;color:#111">No Selection</div></div>
<div class="a" style="left:880px;top:203px;width:25px;height:24px;background:#e6e6e6;border:1px solid #a8a8a8"></div>
<div class="a" style="left:913px;top:203px;width:25px;height:24px;background:#e6e6e6;border:1px solid #a8a8a8"></div>
<div class="a" style="left:946px;top:203px;width:25px;height:24px;background:#e6e6e6;border:1px solid #a8a8a8"></div>
<div class="a" style="left:979px;top:203px;width:25px;height:24px;background:#e6e6e6;border:1px solid #a8a8a8"></div>
<div class="a" style="left:1012px;top:203px;width:25px;height:24px;background:#e6e6e6;border:1px solid #a8a8a8"></div>
<svg style="left:0;top:0" width="1265" height="863" viewBox="0 0 1265 863"><rect x="883.5" y="206.5" width="18" height="17" fill="none" stroke="#9cb0c0" stroke-width="0.8" stroke-dasharray="1.8 1.5"/><circle cx="892" cy="215" r="4" fill="none" stroke="#1e88e5" stroke-width="1.2"/><rect x="885" y="216" width="6" height="5.5" fill="none" stroke="#f0a800" stroke-width="1.2"/><path d="M893 209 C895.5 207.5 898 208 899.5 211" stroke="#3aaa35" stroke-width="1.3" fill="none"/><path d="M897 210.5 H901.5 L899.2 213.5 Z" fill="#3aaa35"/><path d="M918 207 V219 M921 208 V218 M918 207 L924 209 M918 219 L924 217" stroke="#9cb0c0" stroke-width="1" fill="none"/><path d="M924 208 V221 L927 218.5 L929.5 223.5 L931 222.5 L928.5 217.5 H932.5 Z" fill="#fff" stroke="#222" stroke-width="0.9"/><rect x="950.5" y="207.5" width="16" height="15" fill="none" stroke="#1e88e5" stroke-width="1" stroke-dasharray="2.5 2"/><path d="M957 211 V223 L959.8 220.5 L962 225 L963.5 224 L961.3 219.8 H965 Z" fill="#fff" stroke="#222" stroke-width="0.9"/><path d="M984 207.5 H986 M988 207.5 H998 M984 211 H986 M988 211 H998 M984 214.5 H986 M988 214.5 H994" stroke="#1e88e5" stroke-width="1"/><path d="M997 213 L992.5 219.5 H995.5 L993.5 224 L999.5 217 H996.5 L999 213 Z" fill="#ffc800" stroke="#6b5400" stroke-width="0.5"/></svg><div class="t" style="left:1020px;top:208px;font-size:14px;font-weight:bold;color:#222">?</div>
<div class="a" style="left:879px;top:234px;width:300px;height:21px;background:#e0e4fc;border:1px solid #a8a8a8;border-top:2px solid #a8a8a8"></div>
<div class="t" style="left:885px;top:240px;font-size:11.5px;font-weight:bold;color:#111">General</div>
<svg style="left:1163px;top:242px" width="10" height="6" viewBox="0 0 10 6"><path d="M0.5 0.5 L5 5.5 L9.5 0.5 Z" fill="#000"/></svg>
<div class="a" style="left:879px;top:262px;width:300px;height:21px;background:#e0e4fc;border:1px solid #a8a8a8;border-top:2px solid #a8a8a8"></div>
<div class="t" style="left:885px;top:268px;font-size:11.5px;font-weight:bold;color:#111">PrintStyle</div>
<svg style="left:1163px;top:269px" width="10" height="6" viewBox="0 0 10 6"><path d="M0.5 5.5 L5 0.5 L9.5 5.5 Z" fill="#000"/></svg>
<div class="a" style="left:879px;top:283px;width:300px;height:102px;background:#f0f0f0;border:1px solid #dcdcdc;border-top:none"></div>
<div class="a" style="left:919px;top:295px;width:260px;height:20px;background:#fff;border:1px solid #a8a8a8;border-right-color:#a8a8a8"><div class="a" style="right:0;top:0;width:17px;height:18px;background:#e3e3e3;border-left:1px solid #b8b8b8"></div><svg style="left:246px;top:6px" width="10" height="6" viewBox="0 0 10 6"><path d="M1 0.8 L5 4.8 L9 0.8" fill="none" stroke="#555" stroke-width="1"/></svg><div class="t" style="left:2px;top:4.7px;font-size:11px;color:#111">No</div></div>
<div class="a" style="left:919px;top:317px;width:260px;height:20px;background:#fff;border:1px solid #a8a8a8;border-right-color:#a8a8a8"><div class="a" style="right:0;top:0;width:17px;height:18px;background:#e3e3e3;border-left:1px solid #b8b8b8"></div><svg style="left:246px;top:6px" width="10" height="6" viewBox="0 0 10 6"><path d="M1 0.8 L5 4.8 L9 0.8" fill="none" stroke="#555" stroke-width="1"/></svg><div class="t" style="left:2px;top:4.7px;font-size:11px;color:#111">ByLayer</div></div>
<div class="a" style="left:919px;top:339px;width:260px;height:20px;background:#fff;border:1px solid #a8a8a8;border-right-color:#a8a8a8"><div class="a" style="right:0;top:0;width:17px;height:18px;background:#e3e3e3;border-left:1px solid #b8b8b8"></div><svg style="left:246px;top:6px" width="10" height="6" viewBox="0 0 10 6"><path d="M1 0.8 L5 4.8 L9 0.8" fill="none" stroke="#555" stroke-width="1"/></svg><div class="t" style="left:2px;top:4.7px;font-size:11px;color:#111">monochrome.ctb</div></div>
<div class="a" style="left:919px;top:361px;width:260px;height:23px;background:#b0cdeb;border:1px solid #a8a8a8;border-right-color:#c3d3e6"><div class="t" style="left:2px;top:6.2px;font-size:11px;color:#111">None</div></div>
<div class="a" style="left:879px;top:392px;width:300px;height:21px;background:#e0e4fc;border:1px solid #a8a8a8;border-top:2px solid #a8a8a8"></div>
<div class="t" style="left:885px;top:398px;font-size:11.5px;font-weight:bold;color:#111">View</div>
<svg style="left:1163px;top:399px" width="10" height="6" viewBox="0 0 10 6"><path d="M0.5 5.5 L5 0.5 L9.5 5.5 Z" fill="#000"/></svg>
<div class="a" style="left:879px;top:413px;width:300px;height:140px;background:#f0f0f0;border:1px solid #dcdcdc;border-top:none"></div>
<div class="a" style="left:919px;top:426px;width:260px;height:23px;background:#b0cdeb;border:1px solid #a8a8a8;border-right-color:#c3d3e6"><div class="t" style="left:2px;top:6.2px;font-size:11px;color:#111">18.274</div></div>
<div class="a" style="left:919px;top:452px;width:260px;height:23px;background:#b0cdeb;border:1px solid #a8a8a8;border-right-color:#c3d3e6"><div class="t" style="left:2px;top:6.2px;font-size:11px;color:#111">17.179</div></div>
<div class="a" style="left:919px;top:478px;width:260px;height:23px;background:#b0cdeb;border:1px solid #a8a8a8;border-right-color:#c3d3e6"><div class="t" style="left:2px;top:6.2px;font-size:11px;color:#111">0</div></div>
<div class="a" style="left:919px;top:504px;width:260px;height:23px;background:#b0cdeb;border:1px solid #a8a8a8;border-right-color:#c3d3e6"><div class="t" style="left:2px;top:6.2px;font-size:11px;color:#111">64.626</div></div>
<div class="a" style="left:919px;top:530px;width:260px;height:23px;background:#b0cdeb;border:1px solid #a8a8a8;border-right-color:#c3d3e6"><div class="t" style="left:2px;top:6.2px;font-size:11px;color:#111">149.613</div></div>
<div class="a" style="left:879px;top:560px;width:300px;height:21px;background:#e0e4fc;border:1px solid #a8a8a8;border-top:2px solid #a8a8a8"></div>
<div class="t" style="left:885px;top:566px;font-size:11.5px;font-weight:bold;color:#111">Misc</div>
<svg style="left:1163px;top:567px" width="10" height="6" viewBox="0 0 10 6"><path d="M0.5 5.5 L5 0.5 L9.5 5.5 Z" fill="#000"/></svg>
<div class="a" style="left:879px;top:581px;width:300px;height:124px;background:#f0f0f0;border:1px solid #dcdcdc;border-top:none"></div>
<div class="a" style="left:919px;top:593px;width:260px;height:20px;background:#fff;border:1px solid #a8a8a8;border-right-color:#a8a8a8"><div class="a" style="right:0;top:0;width:17px;height:18px;background:#e3e3e3;border-left:1px solid #b8b8b8"></div><svg style="left:246px;top:6px" width="10" height="6" viewBox="0 0 10 6"><path d="M1 0.8 L5 4.8 L9 0.8" fill="none" stroke="#555" stroke-width="1"/></svg><div class="t" style="left:2px;top:4.7px;font-size:11px;color:#111">1:1</div></div>
<div class="a" style="left:919px;top:615px;width:260px;height:20px;background:#fff;border:1px solid #a8a8a8;border-right-color:#a8a8a8"><div class="a" style="right:0;top:0;width:17px;height:18px;background:#e3e3e3;border-left:1px solid #b8b8b8"></div><svg style="left:246px;top:6px" width="10" height="6" viewBox="0 0 10 6"><path d="M1 0.8 L5 4.8 L9 0.8" fill="none" stroke="#555" stroke-width="1"/></svg><div class="t" style="left:2px;top:4.7px;font-size:11px;color:#111">Yes</div></div>
<div class="a" style="left:919px;top:637px;width:260px;height:20px;background:#fff;border:1px solid #a8a8a8;border-right-color:#a8a8a8"><div class="a" style="right:0;top:0;width:17px;height:18px;background:#e3e3e3;border-left:1px solid #b8b8b8"></div><svg style="left:246px;top:6px" width="10" height="6" viewBox="0 0 10 6"><path d="M1 0.8 L5 4.8 L9 0.8" fill="none" stroke="#555" stroke-width="1"/></svg><div class="t" style="left:2px;top:4.7px;font-size:11px;color:#111">Yes</div></div>
<div class="a" style="left:919px;top:659px;width:260px;height:20px;background:#fff;border:1px solid #a8a8a8;border-right-color:#a8a8a8"><div class="a" style="right:0;top:0;width:17px;height:18px;background:#e3e3e3;border-left:1px solid #b8b8b8"></div><svg style="left:246px;top:6px" width="10" height="6" viewBox="0 0 10 6"><path d="M1 0.8 L5 4.8 L9 0.8" fill="none" stroke="#555" stroke-width="1"/></svg><div class="t" style="left:2px;top:4.7px;font-size:11px;color:#111">No</div></div>
<div class="a" style="left:919px;top:681px;width:260px;height:24px;background:#b0cdeb;border:1px solid #a8a8a8;border-right-color:#c3d3e6"><div class="t" style="left:2px;top:6.7px;font-size:11px;color:#111"></div></div>
<svg style="left:0;top:0" width="1265" height="863" viewBox="0 0 1265 863"><path d="M891.5 305.5 A8 8 0 0 1 907.5 305.5" fill="none" stroke="#1e88e5" stroke-width="1.3"/><path d="M891.5 305.5 A8 8 0 0 0 907.5 305.5" fill="none" stroke="#222" stroke-width="1.3"/><path d="M890 305.5 H909" stroke="#222" stroke-width="1.2"/><path d="M899.5 300 V311" stroke="#1e88e5" stroke-width="1.6"/><path d="M896.8 302 L899.5 298.5 L902.2 302 Z M896.8 309 L899.5 312.5 L902.2 309 Z" fill="#1e88e5"/><rect x="889" y="319" width="2.4" height="15" fill="#c8102e"/><rect x="893.3" y="319" width="2.4" height="15" fill="#3aaa35"/><path d="M897.5 321 L900 319 M897.5 325 L900 323 M897.5 329 L900 327 M897.5 333 L900 331" stroke="#2a9bea" stroke-width="1.2"/><rect x="904" y="322" width="4.5" height="7" fill="#ffb300"/><rect x="904" y="329" width="4.5" height="2" fill="#b0bcc6"/><path d="M902 335 Q906 335 908.5 331 V334 Q908 336 906 336 H902 Z" fill="#222"/><rect x="889" y="340" width="11" height="2.5" fill="#1a5fb4"/><rect x="889" y="344" width="11" height="1" fill="#222"/><rect x="889" y="347" width="2.4" height="7" fill="#c8102e"/><rect x="893" y="347" width="2.4" height="7" fill="#7bc043"/><path d="M897 348 L899 347 M897 351 L899 350 M897 354 L899 353" stroke="#2a9bea" stroke-width="1.1"/><rect x="889" y="356" width="11" height="1.5" fill="#666"/><rect x="903.5" y="344" width="4.5" height="7.5" fill="#ffb300"/><rect x="903.5" y="351.5" width="4.5" height="2" fill="#b0bcc6"/><path d="M902 357 Q906 357 908 353.5 V356 Q907.5 358 905.5 358 H902 Z" fill="#222"/><rect x="889" y="363" width="2.8" height="17" fill="#c8102e"/><path d="M889 380.5 L899 372 V368" stroke="none"/><rect x="896" y="363" width="2.8" height="9" fill="#3aaa35"/><path d="M904 363 H908 V367 Z" fill="#1e88e5"/><path d="M902.5 371 L908 366 M898 375 H908 M893 378.5 H908 M890 382 H908" stroke="#222" stroke-width="1.6"/><path d="M891 381 L903 370" stroke="#222" stroke-width="1.2"/><path d="M906.22 438.62 A8.2 8.2 0 1 0 899.72 444.58" fill="none" stroke="#333" stroke-width="1.3"/><circle cx="898.3" cy="436.5" r="2" fill="#ffc800" stroke="#333" stroke-width="0.6"/><text x="902.5" y="446.0" font-family="Liberation Mono" font-weight="bold" font-size="7.5" fill="#222">x</text><path d="M906.22 464.62 A8.2 8.2 0 1 0 899.72 470.58" fill="none" stroke="#333" stroke-width="1.3"/><circle cx="898.3" cy="462.5" r="2" fill="#ffc800" stroke="#333" stroke-width="0.6"/><text x="902.5" y="472.0" font-family="Liberation Mono" font-weight="bold" font-size="7.5" fill="#222">y</text><path d="M906.22 490.62 A8.2 8.2 0 1 0 899.72 496.58" fill="none" stroke="#333" stroke-width="1.3"/><circle cx="898.3" cy="488.5" r="2" fill="#ffc800" stroke="#333" stroke-width="0.6"/><text x="902.5" y="498.0" font-family="Liberation Mono" font-weight="bold" font-size="7.5" fill="#222">z</text><path d="M895.5 508.5 H902.5 M895.5 521.5 H902.5" stroke="#222" stroke-width="1"/><path d="M899 510 V520" stroke="#1e88e5" stroke-width="1.2"/><path d="M897 512 L899 509.5 L901 512 Z M897 518 L899 520.5 L901 518 Z" fill="#1e88e5"/><path d="M891.5 537 V546 M906.5 537 V546" stroke="#222" stroke-width="1"/><path d="M893 541.5 H905" stroke="#1e88e5" stroke-width="1.1"/><path d="M895 539.5 L892.5 541.5 L895 543.5 Z M903 539.5 L905.5 541.5 L903 543.5 Z" fill="#1e88e5"/><path d="M895.5 610.5 V600.5 L897 598.5 H902 L903.5 600.5 V610.5 M895.5 605 H903.5" fill="none" stroke="#222" stroke-width="2"/><rect x="897.5" y="595.5" width="4" height="1.8" fill="#222"/><rect x="889.5" y="615.5" width="19" height="19" fill="#f4f8fc" stroke="#1e88e5" stroke-width="1.2"/><path d="M897.5 627 V619.5 M897.5 627 H904.5 M897.5 627 L893.0 631.5" stroke="#222" stroke-width="1.2" fill="none"/><path d="M895.2 620.0 L897.5 617.5 L899.8 620.0 Z M904.0 624.7 L906.5 627 L904.0 629.3 Z M892.0 632.5 L892.3 629.2 L895.3 632.2 Z" fill="#222"/><path d="M892.5 652.4 V642.8 M892.5 652.4 H904.3 M892.5 652.4 L890.0 654.9" stroke="#222" stroke-width="1.2" fill="none"/><path d="M890.2 643.3 L892.5 640.8 L894.8 643.3 Z M903.8 650.1 L906.3 652.4 L903.8 654.6999999999999 Z M889.0 655.9 L889.3 652.6 L892.3 655.6 Z" fill="#222"/><text x="897.3" y="644.5" font-family="Liberation Mono" font-weight="bold" font-size="7.2" fill="#222" letter-spacing="-0.6">0.0</text><path d="M895.5 672.7 V663.0 M895.5 672.7 H905.0 M895.5 672.7 L892.0 676.2" stroke="#222" stroke-width="1.2" fill="none"/><path d="M893.2 663.5 L895.5 661.0 L897.8 663.5 Z M904.5 670.4000000000001 L907.0 672.7 L904.5 675.0 Z M891.0 677.2 L891.3 673.9000000000001 L894.3 676.9000000000001 Z" fill="#222"/><circle cx="905.2" cy="662.8" r="3.6" fill="#3aaa35"/><path d="M893.7 698.8 V688.4 M893.7 698.8 H904.3000000000001 M893.7 698.8 L890.2 702.3" stroke="#222" stroke-width="1.2" fill="none"/><path d="M891.4000000000001 688.9 L893.7 686.4 L896.0 688.9 Z M903.8000000000001 696.5 L906.3000000000001 698.8 L903.8000000000001 701.0999999999999 Z M889.2 703.3 L889.5 700.0 L892.5 703.0 Z" fill="#222"/><path d="M901.8 693 V687 L903 685.5 H905.5 L906.7 687 V693 M901.8 690 H906.7" fill="none" stroke="#333" stroke-width="1.2"/></svg>
<div class="a" style="left:1217px;top:165px;width:24px;height:569px;background:#c0c0c0;border:1px solid #9a9a9a"></div>
<svg style="left:1224px;top:172px" width="10" height="10" viewBox="0 0 10 10"><path d="M1 1 L9 9 M9 1 L1 9" stroke="#111" stroke-width="1.6"/></svg>
<svg style="left:1223px;top:193px" width="11" height="16" viewBox="0 0 11 16"><path d="M1 1 H10 M2.5 1 V3 L3.5 8 H7.5 L8.5 3 V1 M1 8.5 H10" stroke="#222" stroke-width="1.5" fill="#222"/><path d="M5.5 9 V15" stroke="#222" stroke-width="1.2"/></svg>
<div class="t" style="left:1223.5px;top:707px;transform:rotate(-90deg);transform-origin:0 0;font-size:12px;font-weight:bold;color:#111">Properties</div>
<svg style="left:1221px;top:714px" width="14" height="14" viewBox="0 0 14 14"><rect x="1" y="1" width="3" height="3.5" fill="#ffc800"/><rect x="5" y="1" width="3" height="3.5" fill="#c8102e"/><rect x="9" y="1" width="3" height="3.5" fill="#3aaa35"/><path d="M1 7 H7 M1 11 H7" stroke="#9cb0c0" stroke-width="0.8" stroke-dasharray="1.2 0.8"/><text x="7.5" y="12.5" font-family="Liberation Mono" font-size="8" fill="#444">A</text></svg>
<div class="a" style="left:1241px;top:166px;width:21px;height:568px;background:#f0f0f0"></div>
<div class="a" style="left:1241px;top:167px;width:19px;height:128px;background:#f0f0f0;border:1px solid #d8d8d8;border-left:none"></div>
<div class="a" style="left:1241px;top:295px;width:19px;height:77px;background:#f0f0f0;border:1px solid #d8d8d8;border-left:none;border-top:none"></div>
<div class="a" style="left:1241px;top:372px;width:20px;height:74px;background:#fff;border:1px solid #d8d8d8;border-left:none"></div>
<div class="t" style="left:1245px;top:285px;transform:rotate(-90deg);transform-origin:0 0;font-size:10.5px;letter-spacing:-0.4px;color:#111">3D CONTENTCENTRAL</div>
<div class="t" style="left:1245px;top:363px;transform:rotate(-90deg);transform-origin:0 0;font-size:11px;color:#111">HomeByMe</div>
<div class="t" style="left:1245px;top:437px;transform:rotate(-90deg);transform-origin:0 0;font-size:11px;color:#111">Properties</div>
</div>
<div id="cmd">
<div class="a" style="left:3px;top:734px;width:1259px;height:2px;background:#fff"></div>
<div class="a" style="left:3px;top:736px;width:1259px;height:3px;background:#777"></div>
<div class="a" style="left:3px;top:739px;width:1259px;height:23px;background:#c0c0c0;border-left:1px solid #9a9a9a;border-right:1px solid #9a9a9a;border-bottom:1.5px solid #888"></div>
<div class="t" style="left:7px;top:746px;font-size:11.5px;font-weight:bold;color:#111">Command Window</div>
<svg style="left:1223px;top:744px" width="10" height="10" viewBox="0 0 10 10"><rect x="0.75" y="3.25" width="6" height="6" fill="none" stroke="#111" stroke-width="1.5"/><path d="M3 3 V0.75 H9.25 V6.75 H7" fill="none" stroke="#111" stroke-width="1.5"/></svg>
<svg style="left:1245px;top:745px" width="10" height="9" viewBox="0 0 10 9"><path d="M0.5 0.5 L9 8.5 M9 0.5 L0.5 8.5" stroke="#111" stroke-width="1.5"/></svg>
<div class="a" style="left:3px;top:762px;width:1259px;height:49px;background:#fff;border-left:1px solid #a0a0a0;border-right:1px solid #d8d8d8;border-bottom:1px solid #a0a0a0;overflow:hidden">
 <div class="t" style="left:4px;top:-3px;font-size:13px;color:#111">Default: <span style="color:#f0952a;font-weight:bold">ON</span></div>
 <div class="t" style="left:4px;top:14px;font-size:13px;color:#111">Options: <span style="color:#1a6fc4"><u>A</u>ll</span>, <span style="color:#1a6fc4"><u>N</u>o origin</span>, <span style="color:#1a6fc4"><u>OF</u>f</span>, <span style="color:#1a6fc4"><u>ON</u></span> or <span style="color:#1a6fc4"><u>OR</u>igin</span></div>
 <div class="t" style="left:5px;top:30px;font-size:13px;color:#111"><b>Specify option»</b> _OFf</div>
</div>
<!-- scrollbar -->
<div class="a" style="left:1244px;top:762px;width:17px;height:48px;background:#f0f0f0"></div>
<svg style="left:1246px;top:768px" width="12" height="7" viewBox="0 0 12 7"><path d="M1 6 L6 1 L11 6 Z" fill="#111"/></svg>
<div class="a" style="left:1246px;top:784px;width:14px;height:9px;background:#cdcdcd"></div>
<svg style="left:1246px;top:799px" width="12" height="7" viewBox="0 0 12 7"><path d="M1 1 L6 6 L11 1 Z" fill="#111"/></svg>
<div class="a" style="left:3px;top:811px;width:1259px;height:15px;background:#fff"></div>
<div class="t" style="left:7px;top:813.5px;font-size:12.5px;color:#111">Command:</div>
</div>
<div id="status">
<div class="t" style="left:6px;top:839px;font-size:12px;color:#111;letter-spacing:-0.45px">T1= 500 D1= 9.6 T2= 21 D2= 2</div>
<div class="a" style="left:365px;top:832px;width:25px;height:24px;background:#e3e3e3;border:1px solid #adadad"></div>
<div class="a" style="left:399px;top:832px;width:25px;height:24px;background:#e3e3e3;border:1px solid #adadad"></div>
<div class="a" style="left:432px;top:832px;width:25px;height:24px;background:#e3e3e3;border:1px solid #adadad"></div>
<div class="a" style="left:465px;top:832px;width:25px;height:24px;background:#e3e3e3;border:1px solid #adadad"></div>
<div class="a" style="left:499px;top:832px;width:25px;height:24px;background:#e3e3e3;border:1px solid #adadad"></div>
<div class="a" style="left:533px;top:832px;width:25px;height:24px;background:#e3e3e3;border:1px solid #adadad"></div>
<div class="a" style="left:566px;top:832px;width:25px;height:24px;background:#cce4f7;border:1.3px solid #1c5fa8"></div>
<div class="a" style="left:599px;top:832px;width:25px;height:24px;background:#cce4f7;border:1.3px solid #1c5fa8"></div>
<div class="a" style="left:632px;top:832px;width:25px;height:24px;background:#cce4f7;border:1.3px solid #1c5fa8"></div>
<div class="a" style="left:665px;top:834px;width:83px;height:19px;background:#cce4f7;border:1.3px solid #1c5fa8"></div>
<div class="t" style="left:665px;width:83px;text-align:center;top:838.5px;font-size:11.6px;color:#111">Dynamic CCS</div>
<div class="a" style="left:758px;top:834px;width:93px;height:19px;background:#e3e3e3;border:1px solid #adadad"></div>
<div class="t" style="left:762px;top:838.5px;font-size:12.5px;color:#111">Annotation</div>
<svg style="left:834px;top:840.5px" width="11" height="7" viewBox="0 0 11 7"><path d="M0.5 0.5 H10.5 L5.5 6.5 Z" fill="#111"/></svg>
<div class="t" style="left:859px;top:838px;font-size:12px;color:#111;letter-spacing:-0.2px">(1:1)</div>
<div class="t" style="left:889px;top:838px;font-size:12px;color:#111;letter-spacing:-0.5px">(37.995,34.648,0)</div>
<svg style="left:0;top:0" width="1265" height="863" viewBox="0 0 1265 863">
 <!-- 1 -->
 <path d="M371 838 H378 V841 H376.5 V847 H373 V841 H371 Z" fill="#666"/><ellipse cx="381" cy="849" rx="3.5" ry="2" fill="#ffc800" stroke="#6b5400" stroke-width="0.5"/>
 <!-- 2 -->
 <path d="M402 838 H421 M402 843 H421 M402 848 H421 M402 853 H421 M405 835 V855 M410 835 V855 M415 835 V855 M420 835 V855" stroke="#a8c4d0" stroke-width="0.7"/><circle cx="406" cy="839" r="2" fill="#d0202a"/><path d="M408 839 V852 L411 849.5 L413.5 854.5 L415 853.5 L412.5 848.8 H416.5 Z" fill="#fff" stroke="#111" stroke-width="0.9"/>
 <!-- 3 -->
 <path d="M435 839 H454 M435 843.5 H454 M435 848 H454 M435 852.5 H454 M438 835.5 V855.5 M442.5 835.5 V855.5 M447 835.5 V855.5 M451.5 835.5 V855.5" stroke="#111" stroke-width="1.1"/>
 <!-- 4 -->
 <path d="M472 839 L484 836 V853 L472 850 Z" fill="none" stroke="#222" stroke-width="1"/><path d="M468 844.5 H488" stroke="#222" stroke-width="0.8" stroke-dasharray="3 1.5 1 1.5"/>
 <!-- 5 -->
 <circle cx="509" cy="845" r="6" fill="none" stroke="#333" stroke-width="1"/><path d="M509 845 L516 837 M509 845 L516 853" stroke="#1e88e5" stroke-width="0.9" stroke-dasharray="2 1.2"/><path d="M512 845 H520" stroke="#1e88e5" stroke-width="0.9" stroke-dasharray="1.5 1.5"/><circle cx="510" cy="844" r="1.2" fill="#1e88e5"/>
 <!-- 6 -->
 <text x="536" y="844" font-family="Liberation Sans" font-size="8" fill="#1e88e5">E</text><path d="M537 852.5 H556 M555 836 V850" stroke="#333" stroke-width="0.8" stroke-dasharray="2 1.2"/><path d="M542 838 V850 L545 847.5 L547.5 852.5 L549 851.5 L546.5 846.8 H550.5 Z" fill="#fff" stroke="#111" stroke-width="0.9"/><circle cx="554" cy="851" r="2.2" fill="#d0202a"/>
 <!-- 7 -->
 <text x="570" y="843" font-family="Liberation Sans" font-size="8" fill="#1e88e5">E</text><path d="M579 839 H582 M577 842 H584 M575 845 H586 M574 848 H587 M573 851 H588" stroke="#222" stroke-width="1"/><path d="M578 839 V852" stroke="#222" stroke-width="0"/>
 <!-- 8 -->
 <path d="M604 837.5 H613 L619 843.5 V852.5 H604 Z" fill="none" stroke="#222" stroke-width="1" stroke-dasharray="2 1.3"/><path d="M606.5 840 H612 L616.5 844.5 V850 H606.5 Z" fill="none" stroke="#222" stroke-width="1"/>
 <!-- 9 -->
 <rect x="639.5" y="840.5" width="12" height="12" fill="none" stroke="#222" stroke-width="1"/><rect x="643" y="836" width="5" height="4" fill="#1e88e5"/><rect x="636" y="844" width="4" height="5" fill="#1e88e5"/><path d="M636 838 H638 M651 838 H653 M636 854 H638" stroke="#1e88e5" stroke-width="0.8"/>
 <!-- grip -->
 <g fill="#fff"><rect x="1258.5" y="849" width="2" height="2"/><rect x="1254.5" y="853" width="2" height="2"/><rect x="1258.5" y="853" width="2" height="2"/><rect x="1250.5" y="857" width="2" height="2"/><rect x="1254.5" y="857" width="2" height="2"/><rect x="1258.5" y="857" width="2" height="2"/></g>
</svg>
</div>
</body></html>
